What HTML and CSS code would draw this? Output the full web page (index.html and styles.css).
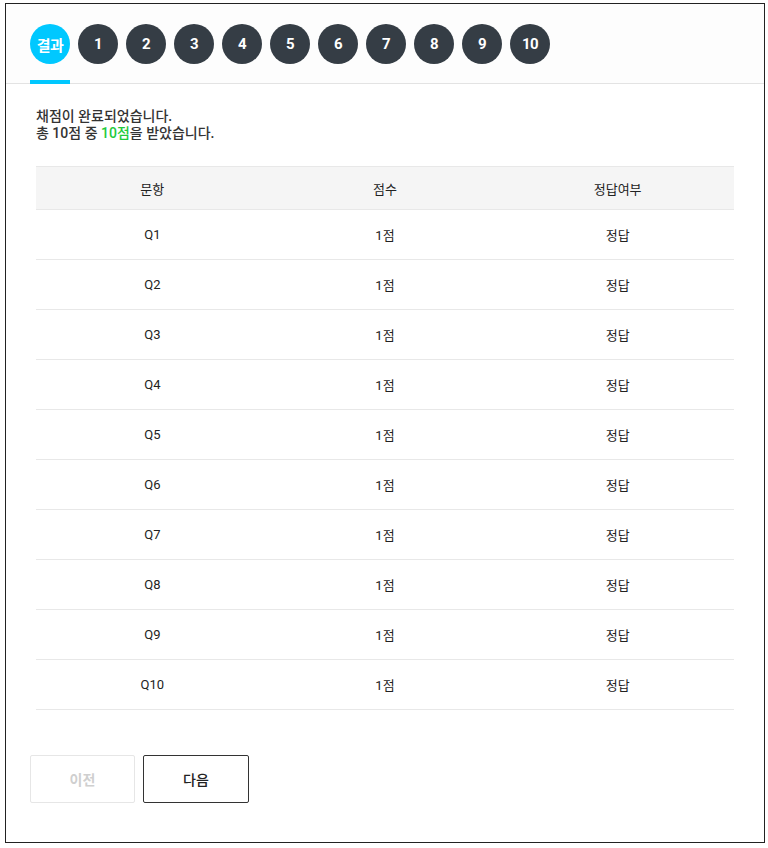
FILE: index.html
```html
<!DOCTYPE html>
<html lang="ko">
<head>
<meta charset="utf-8">
<link rel="stylesheet" href="styles.css">
</head>
<body>
<div class="frame">
  <div class="tabs">
    <div class="tab active"><span class="dot">결과</span></div>
    <div class="tab"><span class="dot">1</span></div>
    <div class="tab"><span class="dot">2</span></div>
    <div class="tab"><span class="dot">3</span></div>
    <div class="tab"><span class="dot">4</span></div>
    <div class="tab"><span class="dot">5</span></div>
    <div class="tab"><span class="dot">6</span></div>
    <div class="tab"><span class="dot">7</span></div>
    <div class="tab"><span class="dot">8</span></div>
    <div class="tab"><span class="dot">9</span></div>
    <div class="tab"><span class="dot">10</span></div>
  </div>
  <div class="content">
    <p class="summary"><span class="line">채점이 완료되었습니다.</span><span class="line">총 10점 중 <span class="score">10점</span>을 받았습니다.</span></p>
    <table class="result">
      <thead>
        <tr><th>문항</th><th>점수</th><th>정답여부</th></tr>
      </thead>
      <tbody>
        <tr><td>Q1</td><td>1점</td><td>정답</td></tr>
        <tr><td>Q2</td><td>1점</td><td>정답</td></tr>
        <tr><td>Q3</td><td>1점</td><td>정답</td></tr>
        <tr><td>Q4</td><td>1점</td><td>정답</td></tr>
        <tr><td>Q5</td><td>1점</td><td>정답</td></tr>
        <tr><td>Q6</td><td>1점</td><td>정답</td></tr>
        <tr><td>Q7</td><td>1점</td><td>정답</td></tr>
        <tr><td>Q8</td><td>1점</td><td>정답</td></tr>
        <tr><td>Q9</td><td>1점</td><td>정답</td></tr>
        <tr><td>Q10</td><td>1점</td><td>정답</td></tr>
      </tbody>
    </table>
  </div>
  <div class="actions">
    <button class="btn disabled" disabled>이전</button>
    <button class="btn">다음</button>
  </div>
</div>
</body>
</html>
```
FILE: styles.css
```css
* { box-sizing: border-box; }
html, body { margin: 0; padding: 0; background: #fff; }
body {
  font-family: Roboto, "Noto Sans CJK KR", sans-serif;
  color: #222;
}
.frame {
  margin: 3px 0 0 5px;
  width: 760px;
  height: 840px;
  border: 1px solid #222;
  background: #fff;
}
.tabs {
  display: flex;
  gap: 8px;
  padding: 20px 24px 0;
  border-bottom: 1px solid #e3e3e3;
  background: #fdfdfd;
}
.tab {
  position: relative;
  padding-bottom: 19px;
}
.dot {
  display: flex;
  align-items: center;
  justify-content: center;
  width: 40px;
  height: 40px;
  border-radius: 50%;
  background: #353d45;
  color: #fff;
  font-weight: 700;
  font-size: 15px;
  letter-spacing: -0.5px;
}
.tab.active .dot { background: #00c8ff; }
.tab.active::after {
  content: "";
  position: absolute;
  left: 0;
  right: 0;
  bottom: -1px;
  height: 4px;
  background: #00c8ff;
}
.content {
  padding: 24px 30px 0;
}
.summary {
  display: flex;
  flex-direction: column;
  margin: 0 0 24px;
  font-size: 14px;
  line-height: 17px;
  font-weight: 500;
  color: #333;
}
.line { display: block; height: 17px; }
.score { color: #1fca3c; }
.result {
  width: 100%;
  border-collapse: collapse;
  table-layout: fixed;
  font-size: 13px;
  color: #222;
}
.result th {
  height: 43px;
  background: #f5f5f5;
  border-top: 1px solid #e8e8e8;
  border-bottom: 1px solid #e8e8e8;
  font-weight: 400;
  padding: 0;
  text-align: center;
}
.result td {
  height: 50px;
  border-bottom: 1px solid #e8e8e8;
  padding: 0;
  text-align: center;
}
.actions {
  display: flex;
  gap: 8px;
  padding: 45px 24px 0;
}
.btn {
  width: 106px;
  height: 48px;
  border: 1px solid #333;
  border-radius: 2px;
  background: #fff;
  font-family: Roboto, "Noto Sans CJK KR", sans-serif;
  font-size: 14px;
  font-weight: 500;
  color: #222;
}
.btn.disabled {
  width: 105px;
  border-color: #e6e6e6;
  color: #cfcfcf;
  font-weight: 700;
}
```
